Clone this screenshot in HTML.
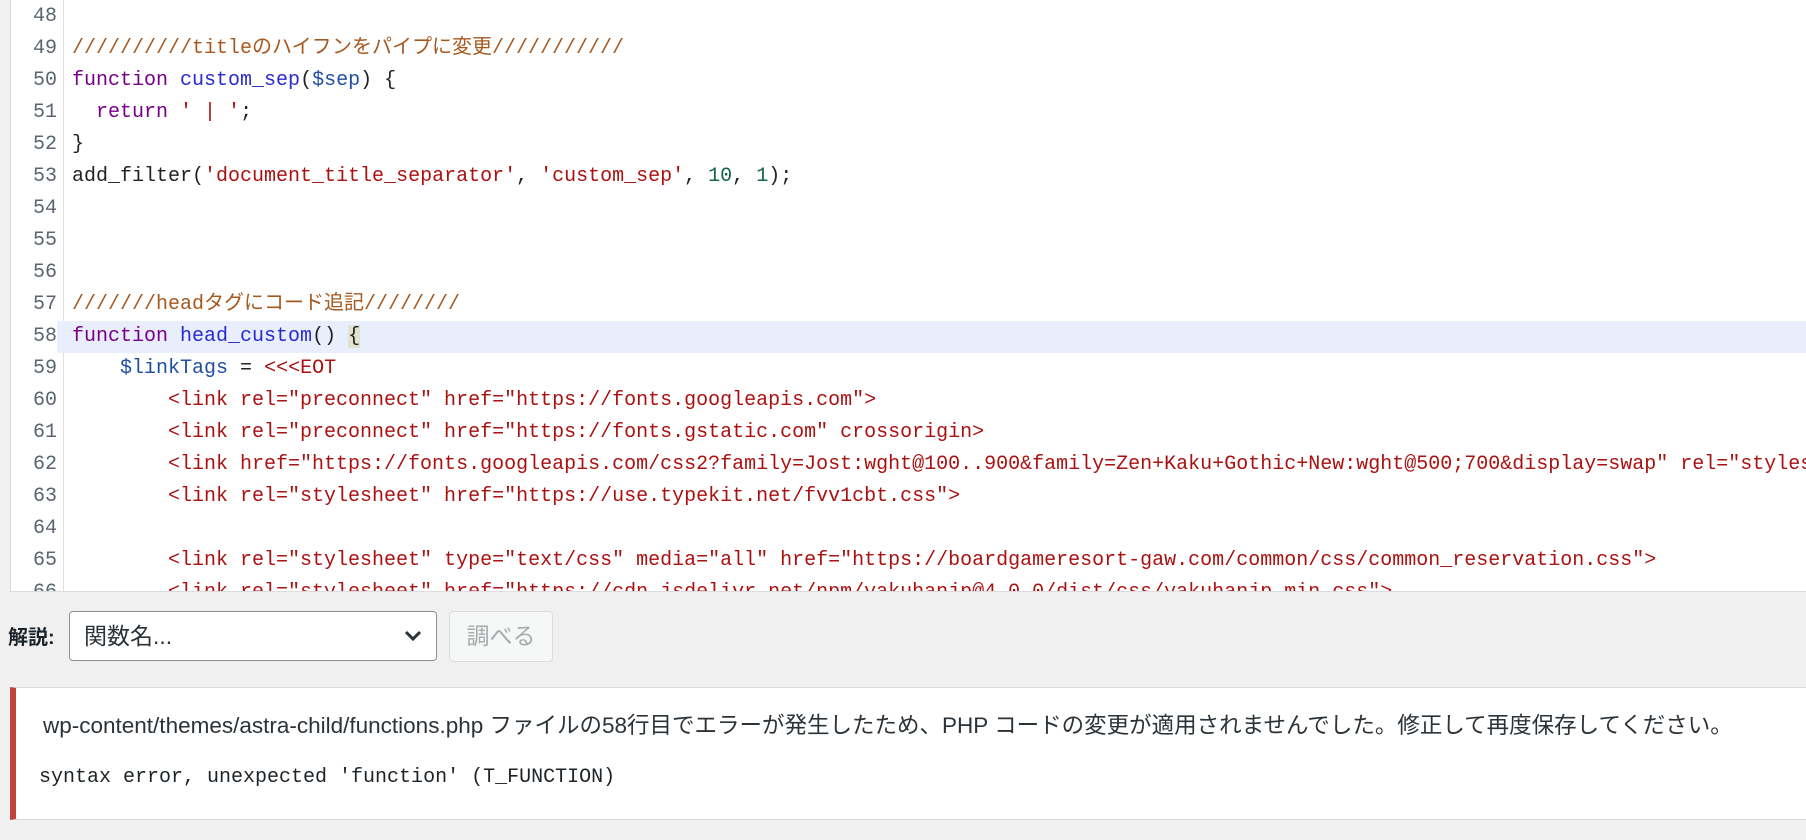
<!DOCTYPE html>
<html><head><meta charset="utf-8"><style>
body{margin:0;width:1806px;height:840px;background:#f0f0f1;position:relative;overflow:hidden;font-family:"Liberation Sans","Noto Sans CJK JP",sans-serif}
.ed{position:absolute;left:10px;top:0;width:1796px;height:591px;background:#fff;border-left:1px solid #dcdcde;border-bottom:1px solid #dcdcde;overflow:hidden}
.gut{position:absolute;left:0;top:0;width:52px;height:591px;border-right:1px solid #e0e0e0;background:#fff}
.rows{position:absolute;left:0;top:1px;width:1796px}
.r{height:32px;line-height:32px;position:relative;white-space:pre;font-family:"Liberation Mono","Noto Sans CJK JP",monospace;font-size:20px;color:#222}
.r .n{position:absolute;left:0;width:46px;text-align:right;color:#5c6470}
.r .c{position:absolute;left:61px}
.hl{background:#e8eefb}
.hl .n{background:#fff}
.hl::before{content:"";position:absolute;left:53px;right:0;top:0;bottom:0;background:#e8eefb}
.cm{color:#a5591f}.kw{color:#770088}.df{color:#2a2ad0}.vr{color:#1f4fa0}.st{color:#a11}.nu{color:#164}
.mb{background:#e2e2d0}
.lbl{position:absolute;left:8px;top:621px;font-weight:bold;font-size:20px;color:#1d2327}
.sel{position:absolute;left:69px;top:611px;width:368px;height:50px;border:1px solid #8c8f94;border-radius:4px;background:#fff;box-sizing:border-box;font-size:23px;line-height:48px;padding-left:14px;color:#2c3338}
.sel svg{position:absolute;right:14px;top:18px}
.btn{position:absolute;left:449px;top:611px;width:104px;height:51px;border:1px solid #dcdcde;border-radius:4px;background:#f6f7f7;box-sizing:border-box;color:#a7aaad;font-size:23px;line-height:49px;text-align:center}
.err{position:absolute;left:10px;top:687px;width:1796px;height:133px;background:#fff;border-left:6px solid #c0443e;box-sizing:border-box;border-top:1px solid #dcdcde;border-bottom:1px solid #dcdcde}
.e1{position:absolute;left:27px;top:20px;font-size:22.5px;color:#2c3338;white-space:nowrap}
.e2{position:absolute;left:23px;top:78px;font-family:"Liberation Mono",monospace;font-size:20px;color:#1d2327;white-space:pre}
</style></head><body>
<div class="ed"><div class="gut"></div><div class="rows">
<div class="r"><span class="n">48</span><span class="c"></span></div>
<div class="r"><span class="n">49</span><span class="c cm">//////////titleのハイフンをパイプに変更///////////</span></div>
<div class="r"><span class="n">50</span><span class="c"><span class="kw">function</span> <span class="df">custom_sep</span>(<span class="vr">$sep</span>) {</span></div>
<div class="r"><span class="n">51</span><span class="c">  <span class="kw">return</span> <span class="st">' | '</span>;</span></div>
<div class="r"><span class="n">52</span><span class="c">}</span></div>
<div class="r"><span class="n">53</span><span class="c">add_filter(<span class="st">'document_title_separator'</span>, <span class="st">'custom_sep'</span>, <span class="nu">10</span>, <span class="nu">1</span>);</span></div>
<div class="r"><span class="n">54</span><span class="c"></span></div>
<div class="r"><span class="n">55</span><span class="c"></span></div>
<div class="r"><span class="n">56</span><span class="c"></span></div>
<div class="r"><span class="n">57</span><span class="c cm">///////headタグにコード追記////////</span></div>
<div class="r hl"><span class="n">58</span><span class="c"><span class="kw">function</span> <span class="df">head_custom</span>() <span class="mb">{</span></span></div>
<div class="r"><span class="n">59</span><span class="c">    <span class="vr">$linkTags</span> = <span class="st">&lt;&lt;&lt;EOT</span></span></div>
<div class="r"><span class="n">60</span><span class="c st">        &lt;link rel="preconnect" href="https://fonts.googleapis.com"&gt;</span></div>
<div class="r"><span class="n">61</span><span class="c st">        &lt;link rel="preconnect" href="https://fonts.gstatic.com" crossorigin&gt;</span></div>
<div class="r"><span class="n">62</span><span class="c st">        &lt;link href="https://fonts.googleapis.com/css2?family=Jost:wght@100..900&amp;family=Zen+Kaku+Gothic+New:wght@500;700&amp;display=swap" rel="stylesheet"&gt;</span></div>
<div class="r"><span class="n">63</span><span class="c st">        &lt;link rel="stylesheet" href="https://use.typekit.net/fvv1cbt.css"&gt;</span></div>
<div class="r"><span class="n">64</span><span class="c"></span></div>
<div class="r"><span class="n">65</span><span class="c st">        &lt;link rel="stylesheet" type="text/css" media="all" href="https://boardgameresort-gaw.com/common/css/common_reservation.css"&gt;</span></div>
<div class="r"><span class="n">66</span><span class="c st">        &lt;link rel="stylesheet" href="https://cdn.jsdelivr.net/npm/yakuhanjp@4.0.0/dist/css/yakuhanjp.min.css"&gt;</span></div>
</div></div>
<div class="lbl">解説:</div>
<div class="sel">関数名...<svg width="18" height="12" viewBox="0 0 18 12"><path d="M2 2l7 7 7-7" fill="none" stroke="#2c3338" stroke-width="3"/></svg></div>
<div class="btn">調べる</div>
<div class="err">
<div class="e1">wp-content/themes/astra-child/functions.php ファイルの58行目でエラーが発生したため、PHP コードの変更が適用されませんでした。修正して再度保存してください。</div>
<div class="e2">syntax error, unexpected 'function' (T_FUNCTION)</div>
</div>
</body></html>
